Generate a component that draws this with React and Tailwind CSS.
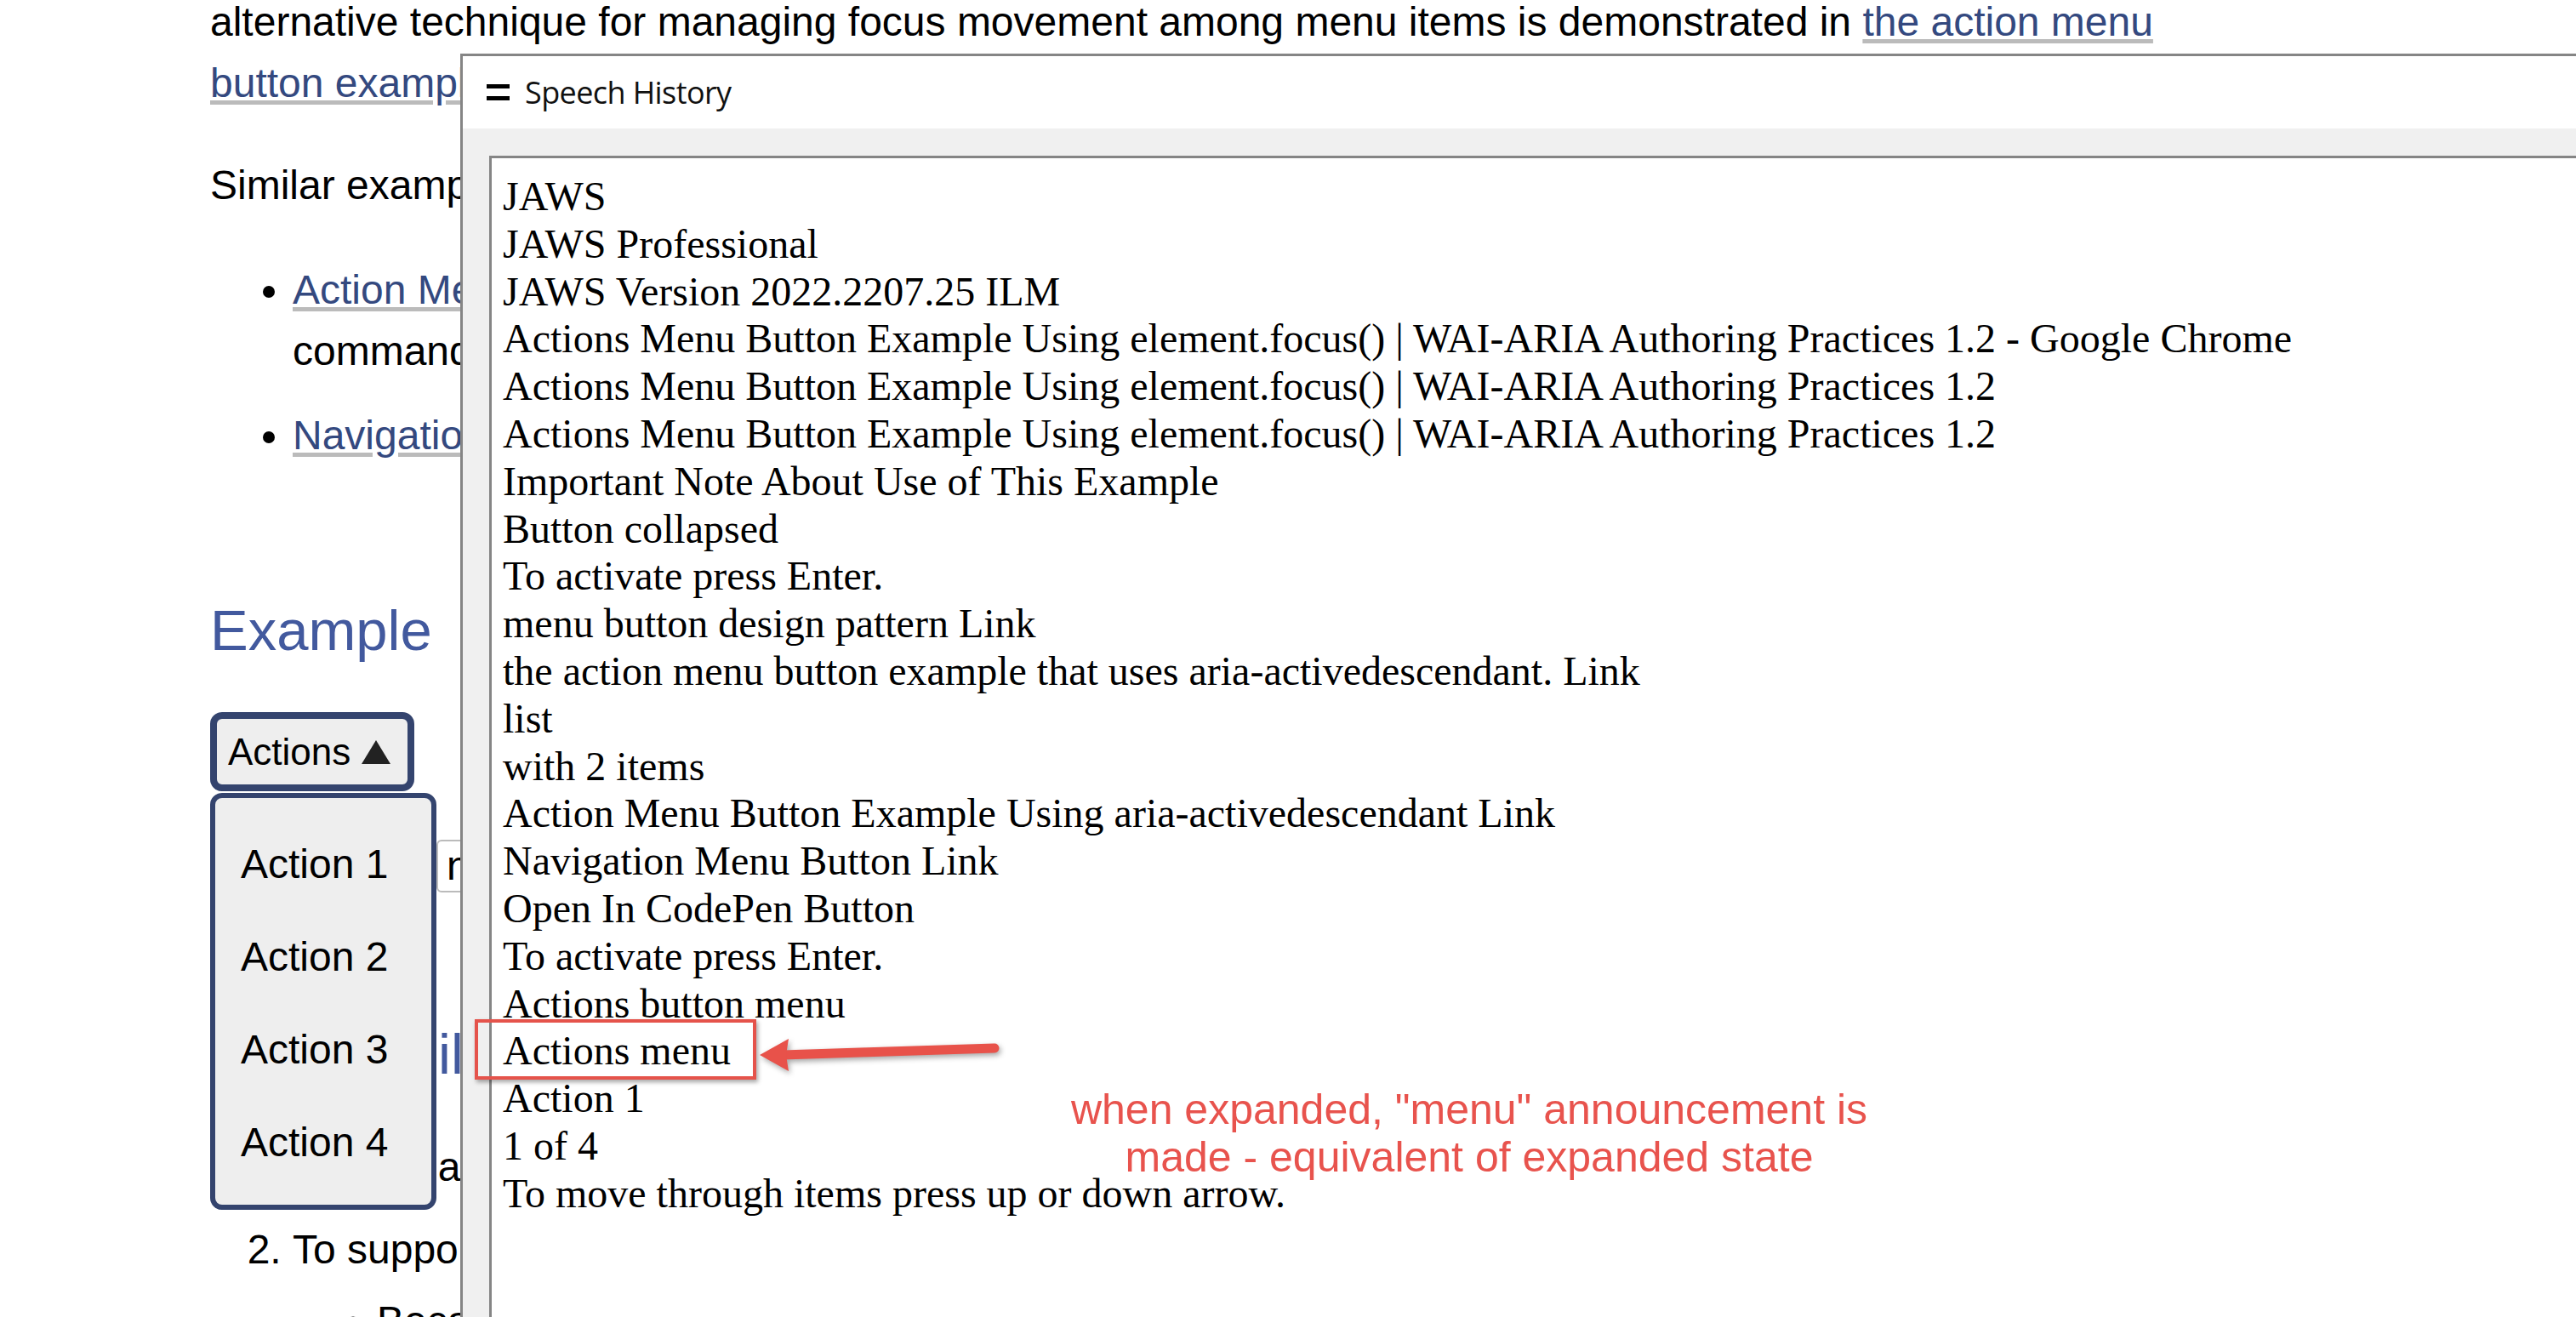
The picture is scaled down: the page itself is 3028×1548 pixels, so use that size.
const speechLines = [
  'JAWS',
  'JAWS Professional',
  'JAWS Version 2022.2207.25 ILM',
  'Actions Menu Button Example Using element.focus() | WAI-ARIA Authoring Practices 1.2 - Google Chrome',
  'Actions Menu Button Example Using element.focus() | WAI-ARIA Authoring Practices 1.2',
  'Actions Menu Button Example Using element.focus() | WAI-ARIA Authoring Practices 1.2',
  'Important Note About Use of This Example',
  'Button collapsed',
  'To activate press Enter.',
  'menu button design pattern Link',
  'the action menu button example that uses aria-activedescendant. Link',
  'list',
  'with 2 items',
  'Action Menu Button Example Using aria-activedescendant Link',
  'Navigation Menu Button Link',
  'Open In CodePen Button',
  'To activate press Enter.',
  'Actions button menu',
  'Actions menu',
  'Action 1',
  '1 of 4',
  'To move through items press up or down arrow.',
];

const link =
  'text-[#34497f] underline decoration-[#bbbbbb] decoration-[5px] underline-offset-[4px]';

function PageBehind() {
  return (
    <div className="pl-[247px] font-['Liberation_Sans',Arial,sans-serif] text-[48px] leading-[72px] text-black">
      <p className="-mt-[10px] w-[2400px]">
        alternative technique for managing focus movement among menu items is demonstrated in{' '}
        <a className={link}>the action menu button example that uses aria-activedescendant</a>.
      </p>
      <p className="mt-[48px]">Similar examples include:</p>
      <ul className="mt-[51px] flex list-disc flex-col gap-[27px] pl-[97px] whitespace-nowrap">
        <li>
          <a className={link}>Action Menu Button Example Using aria-activedescendant</a>: A button that
          opens a menu of actions or
          <br />
          commands where focus in the menu is managed using aria-activedescendant.
        </li>
        <li>
          <a className={link}>Navigation Menu Button</a>: A menu button made from a link that opens a menu of
          items that behave as links.
        </li>
      </ul>
      <h2 className="mt-[153px] text-[67px] leading-[79px] font-normal text-[#42599e]">Example</h2>
      <div className="mt-[57px] flex h-[93px] w-[240px] items-center gap-[13px] rounded-[14px] border-[8px] border-[#34446e] bg-[#eeeeee] pl-[13px] text-[44px]">
        <span>Actions</span>
        <svg width="34" height="28" viewBox="0 0 34 28">
          <polygon points="17,0 34,28 0,28" fill="#222222" />
        </svg>
      </div>
      <div className="mt-[57px] flex h-[62px] items-center">
        <span className="w-[266px]">Last Action:</span>
        <div className="flex h-[62px] w-[420px] items-center rounded-[6px] border-2 border-[#bbbbbb] pl-[10px]">
          none
        </div>
      </div>
      <h2 className="mt-[150px] text-[67px] leading-[79px] font-normal text-[#42599e]">
        Accessibility Features
      </h2>
      <ol className="mt-[58px] flex list-decimal flex-col gap-[25px] pl-[97px] whitespace-nowrap">
        <li>A down arrow icon that indicates the button opens a menu is included.</li>
        <li>
          To support operating system high contrast settings:
          <ul className="mt-[12px] list-[circle] pl-[99px]">
            <li>Because transparent borders are visible on some systems with high contrast enabled.</li>
          </ul>
        </li>
      </ol>
    </div>
  );
}

function ActionsMenu() {
  return (
    <div className="absolute top-[932px] left-[247px] flex h-[490px] w-[266px] flex-col rounded-[14px] border-[6px] border-[#34446e] bg-[#eeeeee] pt-[23px] pl-[30px] font-['Liberation_Sans',Arial,sans-serif] text-[48px] leading-[109px] text-black">
      <div>Action 1</div>
      <div>Action 2</div>
      <div>Action 3</div>
      <div>Action 4</div>
    </div>
  );
}

function SpeechHistory() {
  return (
    <div className="absolute top-[63px] left-[541px] flex h-[1600px] w-[2600px] flex-col border-[3px] border-[#858585] bg-white">
      <div className="flex h-[85px] shrink-0 items-center pl-[28px]">
        <div className="flex w-[27px] flex-col gap-[9px]">
          <div className="h-[5px] bg-black" />
          <div className="h-[5px] bg-black" />
        </div>
        <span className="ml-[18px] font-['Open_Sans','Noto_Sans',sans-serif] text-[36px] tracking-[-0.6px] text-[#111111]">
          Speech History
        </span>
      </div>
      <div className="flex flex-1 flex-col bg-[#f0f0f0] pt-[32px] pl-[31px]">
        <div className="flex-1 border-[3px] border-[#858585] bg-white pt-[17px] pl-[13px] font-['Liberation_Serif','Times_New_Roman',serif] text-[48px] leading-[55.8px] text-black">
          {speechLines.map((line, i) => (
            <div key={i} className="whitespace-nowrap">
              {line}
            </div>
          ))}
        </div>
      </div>
    </div>
  );
}

function Annotation() {
  return (
    <>
      <div className="absolute top-[1198px] left-[558px] h-[71px] w-[331px] border-[4px] border-[#e5534b] shadow-[2px_3px_5px_rgba(0,0,0,0.35)]" />
      <svg
        className="absolute top-[1205px] left-[880px] drop-shadow-[2px_3px_3px_rgba(0,0,0,0.35)]"
        width="310"
        height="70"
        viewBox="0 0 310 70"
      >
        <line x1="40" y1="35" x2="289" y2="27" stroke="#e8524a" strokeWidth="11" strokeLinecap="round" />
        <polygon points="13,35 47,16 44,35 47,54" fill="#e8524a" />
      </svg>
      <div className="absolute top-[1276px] left-[1227px] w-[1000px] text-center font-['Liberation_Sans',Arial,sans-serif] text-[50px] leading-[56px] text-[#e8534d]">
        when expanded, "menu" announcement is
        <br />
        made - equivalent of expanded state
      </div>
    </>
  );
}

export default function App() {
  return (
    <div className="relative h-[1548px] w-[3028px] overflow-hidden bg-white">
      <PageBehind />
      <ActionsMenu />
      <SpeechHistory />
      <Annotation />
    </div>
  );
}
